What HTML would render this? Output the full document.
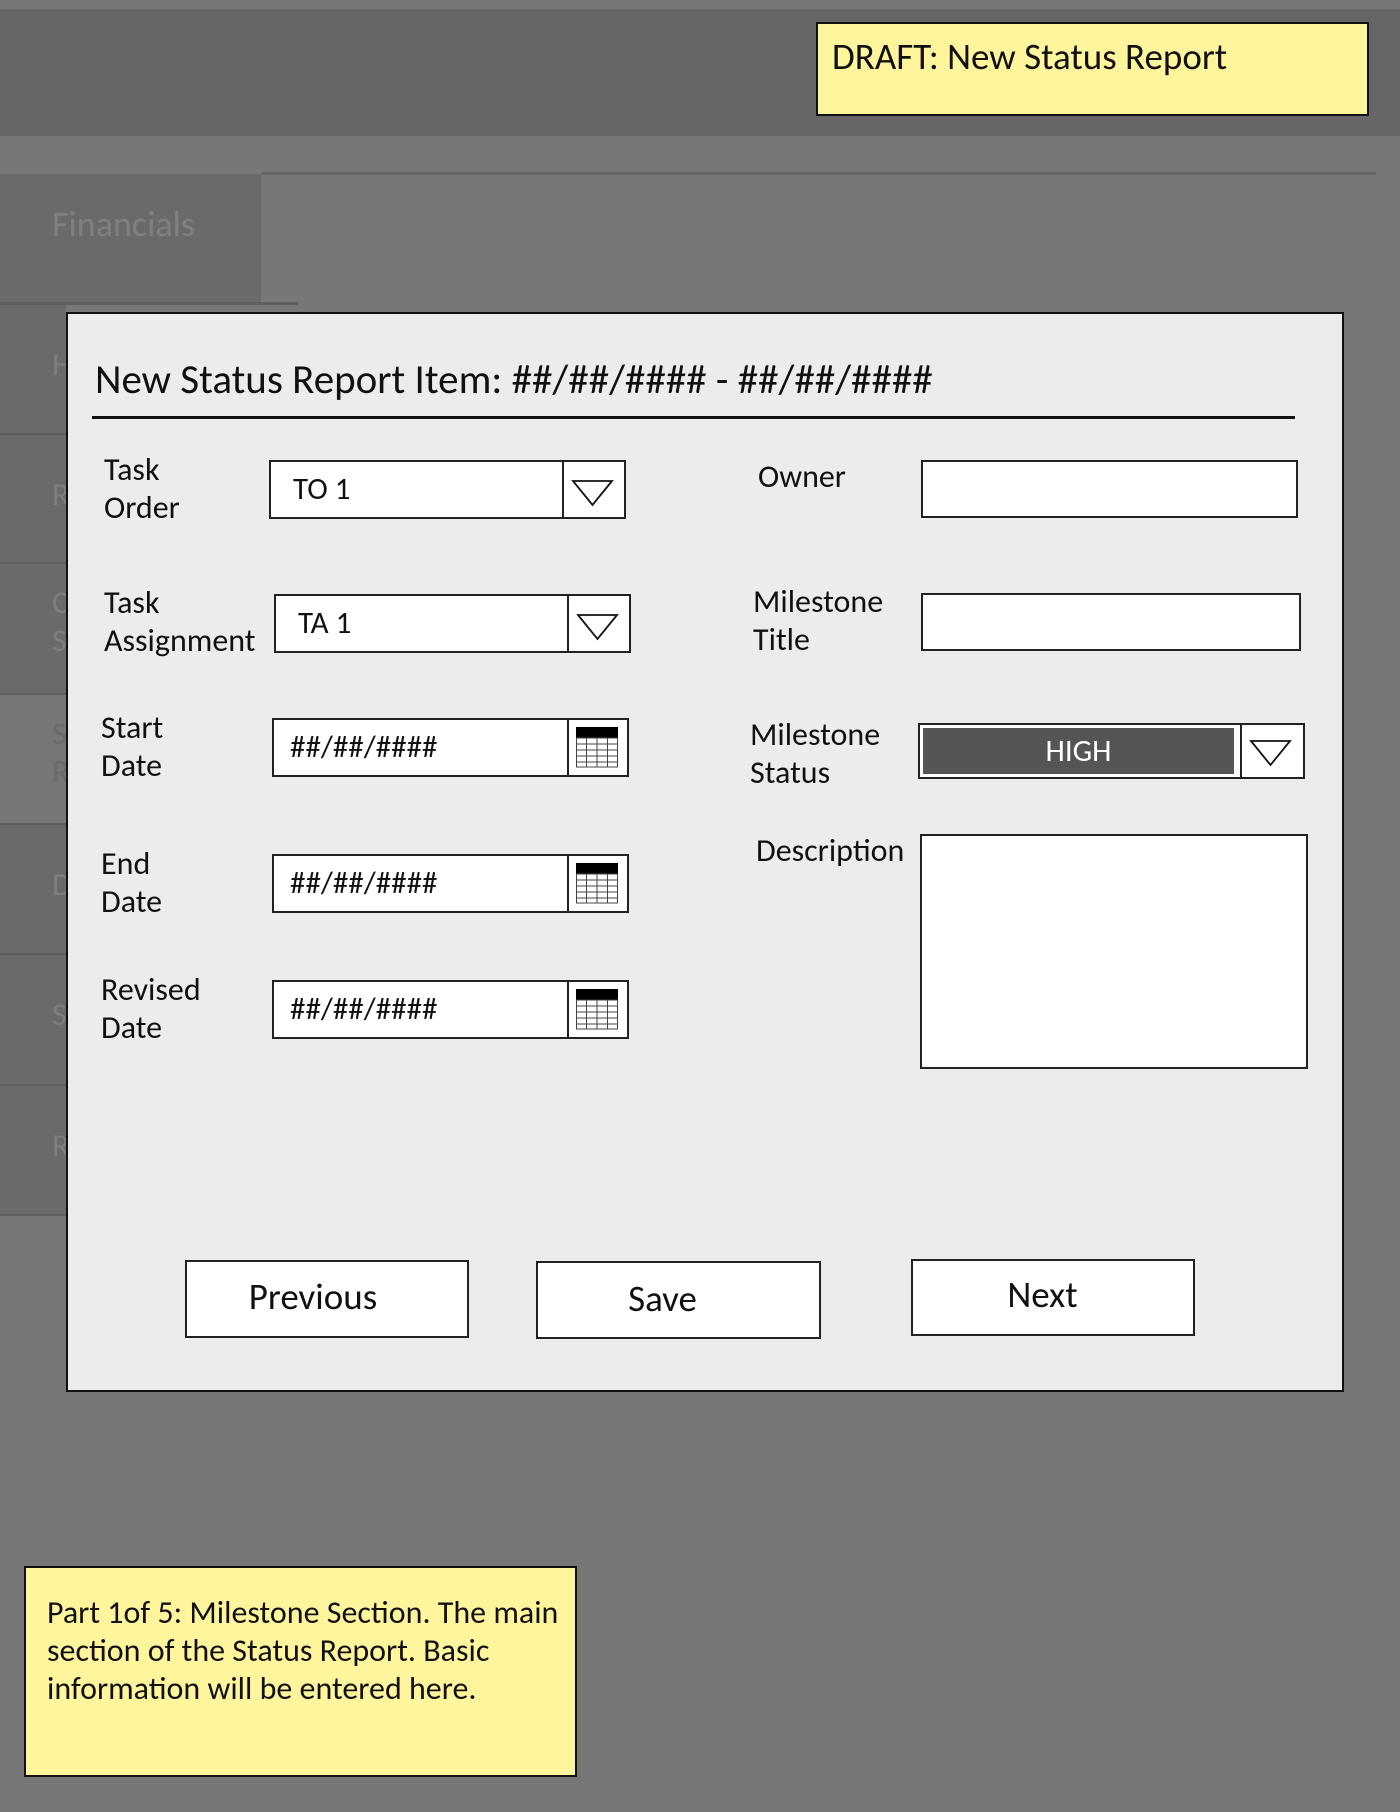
<!DOCTYPE html>
<html><head><meta charset="utf-8"><style>
*{margin:0;padding:0;box-sizing:border-box}
body{width:1400px;height:1812px;background:#777;position:relative;overflow:hidden;font-family:Carlito,"Liberation Sans",sans-serif;color:#111}
.a{position:absolute}
.lbl{position:absolute;font-size:32px;line-height:38px}
.box{position:absolute;background:#fff;border:2px solid #222}
.sep{position:absolute;top:0;bottom:0;width:2px;background:#222}
.txt{position:absolute;font-size:31px;left:22px;line-height:38px}
.btn{position:absolute;background:#fff;border:2px solid #222;font-size:37px;text-align:center}
.tab{position:absolute;left:0;width:66px;background:#6a6a6a;border-bottom:2px solid #5e5e5e;color:#7e7e7e;font-size:32px}
</style></head><body>
<div class="a" style="left:0;top:9px;width:1400px;height:127px;background:#666"></div>
<div class="a" style="left:816px;top:22px;width:553px;height:94px;background:#fff59d;border:2px solid #111;font-size:37px;padding:10px 0 0 14px">DRAFT: New Status Report</div>
<div class="a" style="left:261px;top:172px;width:1115px;height:3px;background:#666"></div>
<div class="a" style="left:0;top:174px;width:261px;height:129px;background:#6a6a6a;color:#808080;font-size:36px;padding:28px 0 0 52px">Financials</div>
<div class="a" style="left:0;top:302px;width:298px;height:3px;background:#5e5e5e"></div>
<div class="tab" style="top:305px;height:130px;padding:40px 0 0 52px">H</div>
<div class="tab" style="top:435px;height:129px;padding:40px 0 0 52px">R</div>
<div class="tab" style="top:564px;height:131px;padding:20px 0 0 52px;line-height:38px">C<br>S</div>
<div class="tab" style="top:695px;height:130px;padding:20px 0 0 52px;line-height:38px;background:#767676;color:#6a6a6a">S<br>R</div>
<div class="tab" style="top:825px;height:130px;padding:40px 0 0 52px">D</div>
<div class="tab" style="top:955px;height:131px;padding:40px 0 0 52px">S</div>
<div class="tab" style="top:1086px;height:130px;padding:40px 0 0 52px">R</div>

<div class="a" style="left:66px;top:312px;width:1278px;height:1080px;background:#ececec;border:2px solid #111"></div>
<div class="a" style="left:95px;top:355px;font-size:41px;white-space:nowrap">New Status Report Item: ##/##/#### - ##/##/####</div>
<div class="a" style="left:92px;top:416px;width:1203px;height:3px;background:#111"></div>

<div class="lbl" style="left:104px;top:451px">Task<br>Order</div>
<div class="box" style="left:269px;top:460px;width:357px;height:59px"><div class="txt" style="top:8px">TO 1</div><div class="sep" style="left:291px"></div>
<svg class="a" style="left:300px;top:17px" width="44" height="28"><path d="M2 2 L41 2 L21.5 26 Z" fill="none" stroke="#111" stroke-width="1.8"/></svg></div>

<div class="lbl" style="left:104px;top:584px">Task<br>Assignment</div>
<div class="box" style="left:274px;top:594px;width:357px;height:59px"><div class="txt" style="top:8px">TA 1</div><div class="sep" style="left:291px"></div>
<svg class="a" style="left:300px;top:17px" width="44" height="28"><path d="M2 2 L41 2 L21.5 26 Z" fill="none" stroke="#111" stroke-width="1.8"/></svg></div>

<div class="lbl" style="left:101px;top:709px">Start<br>Date</div>
<div class="lbl" style="left:101px;top:845px">End<br>Date</div>
<div class="lbl" style="left:101px;top:971px">Revised<br>Date</div>

<div class="box" style="left:272px;top:718px;width:357px;height:59px"><div class="txt" style="top:8px;left:16px">##/##/####</div><div class="sep" style="left:293px"></div>
<svg class="a" style="left:301px;top:6px" width="44" height="44"><rect x="1" y="1" width="42" height="11" fill="#000"/><g stroke="#444" stroke-width="1" fill="none"><rect x="1.5" y="12" width="41" height="29"/><path d="M1 18H43M1 24H43M1 30H43M1 36H43M11.5 12V41M22 12V41M32.5 12V41"/></g></svg></div>
<div class="box" style="left:272px;top:854px;width:357px;height:59px"><div class="txt" style="top:8px;left:16px">##/##/####</div><div class="sep" style="left:293px"></div>
<svg class="a" style="left:301px;top:6px" width="44" height="44"><rect x="1" y="1" width="42" height="11" fill="#000"/><g stroke="#444" stroke-width="1" fill="none"><rect x="1.5" y="12" width="41" height="29"/><path d="M1 18H43M1 24H43M1 30H43M1 36H43M11.5 12V41M22 12V41M32.5 12V41"/></g></svg></div>
<div class="box" style="left:272px;top:980px;width:357px;height:59px"><div class="txt" style="top:8px;left:16px">##/##/####</div><div class="sep" style="left:293px"></div>
<svg class="a" style="left:301px;top:6px" width="44" height="44"><rect x="1" y="1" width="42" height="11" fill="#000"/><g stroke="#444" stroke-width="1" fill="none"><rect x="1.5" y="12" width="41" height="29"/><path d="M1 18H43M1 24H43M1 30H43M1 36H43M11.5 12V41M22 12V41M32.5 12V41"/></g></svg></div>

<div class="lbl" style="left:758px;top:458px">Owner</div>
<div class="box" style="left:921px;top:460px;width:377px;height:58px"></div>
<div class="lbl" style="left:753px;top:583px">Milestone<br>Title</div>
<div class="box" style="left:921px;top:593px;width:380px;height:58px"></div>
<div class="lbl" style="left:750px;top:716px">Milestone<br>Status</div>
<div class="box" style="left:918px;top:723px;width:387px;height:56px"><div class="a" style="left:3px;top:3px;width:311px;height:46px;background:#555;color:#fff;font-size:31px;text-align:center;line-height:46px">HIGH</div><div class="sep" style="left:320px"></div>
<svg class="a" style="left:329px;top:14px" width="44" height="28"><path d="M2 2 L41 2 L21.5 26 Z" fill="none" stroke="#111" stroke-width="1.8"/></svg></div>
<div class="lbl" style="left:756px;top:832px">Description</div>
<div class="box" style="left:920px;top:834px;width:388px;height:235px"></div>

<div class="btn" style="left:185px;top:1260px;width:284px;height:78px;line-height:70px;padding-right:28px">Previous</div>
<div class="btn" style="left:536px;top:1261px;width:285px;height:78px;line-height:72px;padding-right:32px">Save</div>
<div class="btn" style="left:911px;top:1259px;width:284px;height:77px;line-height:68px;padding-right:21px">Next</div>

<div class="a" style="left:24px;top:1566px;width:553px;height:211px;background:#fff59d;border:2px solid #111;font-size:32px;line-height:38px;padding:26px 0 0 21px;white-space:nowrap">Part 1of 5: Milestone Section. The main<br>section of the Status Report. Basic<br>information will be entered here.</div>
</body></html>
